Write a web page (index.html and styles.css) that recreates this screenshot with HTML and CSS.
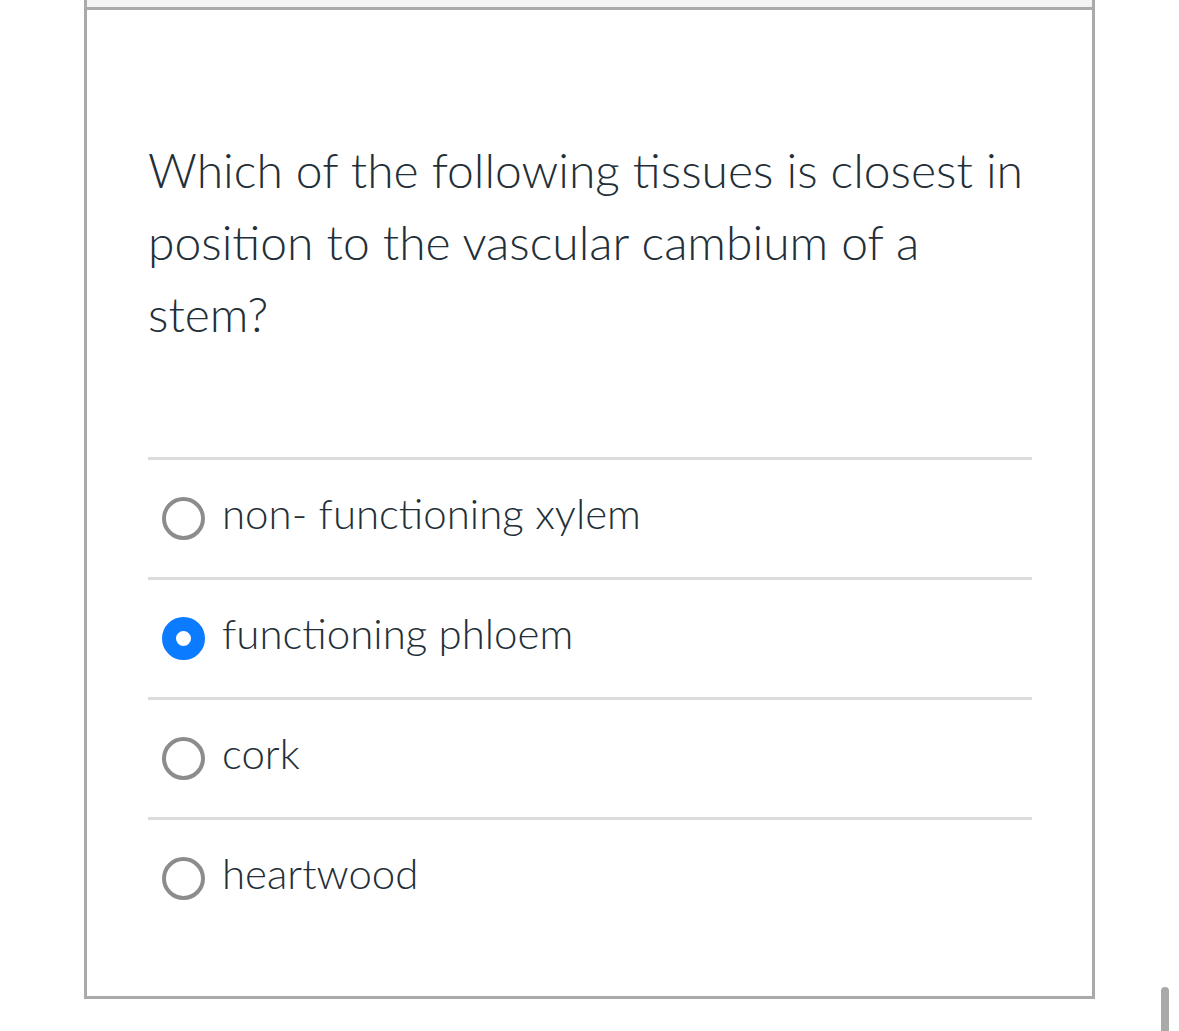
FILE: index.html
```html
<!DOCTYPE html>
<html>
    <head>
        <title>Quiz question</title>
        <meta charset="UTF-8">
        <meta name="viewport" content="width=device-width">
        <link rel="stylesheet" href="styles.css">
    </head>
    <body>
        <div class="question">
            <div class="question-header"></div>
            <div class="question-body">
                <p class="question-text">Which of the following tissues is closest in position to the vascular cambium of a stem?</p>
                <ul class="answers">
                    <li class="answer">
                        <span class="radio"></span>
                        <span class="answer-label">non- functioning xylem</span>
                    </li>
                    <li class="answer">
                        <span class="radio checked"></span>
                        <span class="answer-label">functioning phloem</span>
                    </li>
                    <li class="answer">
                        <span class="radio"></span>
                        <span class="answer-label">cork</span>
                    </li>
                    <li class="answer">
                        <span class="radio"></span>
                        <span class="answer-label">heartwood</span>
                    </li>
                </ul>
            </div>
        </div>
        <div class="scrollbar"></div>
    </body>
</html>
```

FILE: styles.css
```css
body
{
    margin: 0;
    background: #fff;
    font-family: Lato, "Open Sans", sans-serif;
    font-weight: 300;
    color: #232f38;
}
.question
{
    width: 1005px;
    margin-left: 84px;
    border: 3px solid #aaaaaa;
    border-top: none;
}
.question-header
{
    height: 7px;
    background: #f4f4f4;
    border-bottom: 3px solid #aaaaaa;
}
.question-body
{
    padding: 124px 60px 59px 61px;
}
.question-text
{
    margin: 0 0 107px 0;
    font-size: 48px;
    line-height: 72px;
}
.answers
{
    margin: 0;
    padding: 0;
}
.answer
{
    list-style: none;
    display: flex;
    align-items: center;
    gap: 17px;
    height: 117px;
    padding-left: 14px;
    border-top: 3px solid #dcdcdc;
    font-size: 42px;
}
.answer-label
{
    margin-top: -11px;
}
.radio
{
    box-sizing: border-box;
    width: 43px;
    height: 43px;
    border: 4.5px solid #8c8c8e;
    border-radius: 50%;
    flex-shrink: 0;
}
.radio.checked
{
    border: 14px solid #0b7bff;
    background: #fff;
}
.scrollbar
{
    position: fixed;
    right: 10px;
    bottom: 0;
    width: 8px;
    height: 44px;
    background: #a9a9a9;
    border-radius: 4px 4px 0 0;
}
```
